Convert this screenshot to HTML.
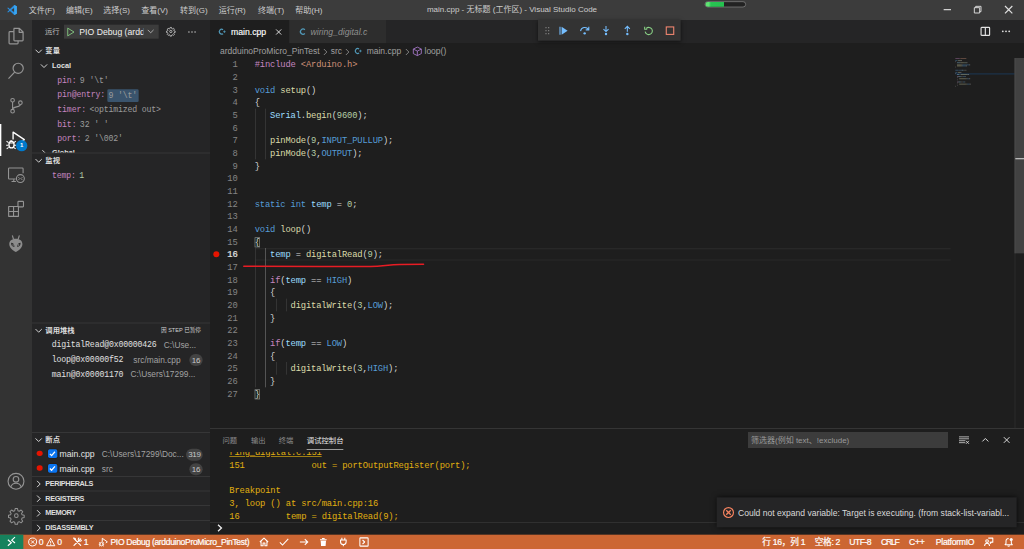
<!DOCTYPE html>
<html lang="zh-CN">
<head>
<meta charset="utf-8">
<title>main.cpp - 无标题 (工作区) - Visual Studio Code</title>
<style>
html,body{margin:0;padding:0;width:1024px;height:549px;overflow:hidden;background:#1e1e1e;}
#root{position:absolute;left:0;top:0;width:1536px;height:823.5px;transform:scale(0.6666667);transform-origin:0 0;
  font-family:"Liberation Sans","Noto Sans CJK SC",sans-serif;font-size:13px;color:#ccc;overflow:hidden;background:#1e1e1e;}
#root *{box-sizing:border-box;}
.abs{position:absolute;}
.mono{font-family:"Liberation Mono","Noto Sans CJK SC",monospace;}
svg{display:block;overflow:visible;}
.t{position:absolute;white-space:pre;line-height:1;}

/* title bar */
#titlebar{left:0;top:0;width:1536px;height:30px;background:#3c3c3c;}
.menu{top:0;height:30px;line-height:30px;font-size:12px;color:#ccc;white-space:pre;}
#wtitle{left:0;top:0;width:1536px;height:30px;line-height:29px;text-align:center;font-size:12px;color:#ccc;white-space:pre;}

/* activity bar */
#activity{left:0;top:30px;width:48px;height:771.5px;background:#333;}
.aicon{left:0;width:48px;height:48px;}
.aicon svg{position:absolute;left:9px;top:9px;width:30px;height:30px;}

/* sidebar */
#sidebar{left:48px;top:30px;width:267px;height:771.5px;background:#252526;overflow:hidden;}
.shead{left:0;width:267px;height:22px;border-top:1px solid #3f3f41;font-size:11px;font-weight:bold;color:#ddd;}
.shead .lbl{position:absolute;left:20px;top:0.6px;line-height:21px;white-space:pre;}
.chev{position:absolute;width:16px;height:16px;}
.row{left:0;width:267px;height:22px;line-height:22px;white-space:pre;font-size:13px;}
.vname{color:#c586c0;}
.vval{color:#9b9b9b;margin-left:5.2px;}

.vr{left:38px;font-size:12.3px;letter-spacing:-0.23px;}
.cs{font-size:12.3px;letter-spacing:-0.23px;color:#e0e0e0;}
.cf{font-size:12.5px;color:#a2a2a2;}
.badge{top:2px;height:18px;line-height:18px;border-radius:9px;background:#434343;color:#c8c8c8;font-size:12px;letter-spacing:-0.4px;text-align:center;}
.bpdot{left:7.2px;top:6px;width:8.8px;height:8.8px;border-radius:5px;background:#e51400;}
.cbx{left:24px;top:4px;width:13.6px;height:13.6px;border-radius:2.5px;background:#0a74f0;box-shadow:0 0 0 0.8px #2a1a10;}
.cbx svg{position:absolute;left:0.3px;top:0.3px}
.bpn{font-size:13px;color:#e4e4e4;}
.bpr .bpn,.bpr .cf,.bpr .badge{margin-top:1.1px}

/* editor */
#tabs{left:315px;top:30px;width:1221px;height:35px;background:#252526;}
#crumbs{left:315px;top:65px;width:1221px;height:22px;background:#1e1e1e;color:#a0a0a0;font-size:13px;}
#code{left:315px;top:87px;width:1221px;height:555px;background:#1e1e1e;overflow:hidden;}
.ln{position:absolute;margin-top:0.7px;left:0;width:41.3px;text-align:right;color:#858585;font-size:13.2px;letter-spacing:-0.22px;height:19px;line-height:19px;}
.cl{position:absolute;margin-top:0.7px;left:67px;height:19px;line-height:19px;font-size:13.2px;letter-spacing:-0.22px;white-space:pre;color:#d4d4d4;}
.k{color:#569cd6}.f{color:#dcdcaa}.v{color:#9cdcfe}.n{color:#b5cea8}.p{color:#c586c0}.s{color:#ce9178}
.g{position:absolute;width:1px;background:#404040;}

.bc{top:4px;line-height:16px;font-size:12.75px;color:#a0a0a0}
.bm{outline:1px solid #888;outline-offset:-1px;background:rgba(0,100,0,0.1)}
/* panel */
#panel{left:315px;top:642px;width:1221px;height:159.5px;background:#1e1e1e;border-top:1px solid #414141;overflow:hidden;}
.ptab{top:0;height:35px;line-height:35px;font-size:11px;color:#8b8b8b;white-space:pre;}
.con{position:absolute;left:29px;height:19px;line-height:19px;font-size:13.2px;letter-spacing:-0.22px;white-space:pre;color:#e0b010;}

/* status */
#status{left:0;top:801.5px;width:1536px;height:22px;background:#cc6633;color:#fff;font-size:13px;letter-spacing:-0.45px;}
.st{position:absolute;top:0;height:22px;line-height:22px;white-space:pre;color:#fff;-webkit-text-stroke:0.3px #fff;}
</style>
</head>
<body>
<div id="root">

<!-- TITLE BAR -->
<div id="titlebar" class="abs">
  <svg class="abs" style="left:9.5px;top:7px;width:16px;height:16px" viewBox="0 0 100 100">
    <path d="M71 4 L31 41 L13 27 L5 31 L24 50 L5 69 L13 73 L31 59 L71 96 L95 86 L95 14 Z M72 29 L72 71 L44 50 Z" fill="#2a8fe0" fill-rule="evenodd"/>
    <path d="M71 4 L95 14 L95 86 L71 96 Z M72 29 L72 71 Z" fill="#3aa6f2"/>
  </svg>
  <div id="wtitle" class="abs">main.cpp - 无标题 (工作区) - Visual Studio Code</div>
  <div class="menu abs" style="left:43px">文件(F)</div>
  <div class="menu abs" style="left:99px">编辑(E)</div>
  <div class="menu abs" style="left:155px">选择(S)</div>
  <div class="menu abs" style="left:212px">查看(V)</div>
  <div class="menu abs" style="left:270px">转到(G)</div>
  <div class="menu abs" style="left:328px">运行(R)</div>
  <div class="menu abs" style="left:387px">终端(T)</div>
  <div class="menu abs" style="left:443px">帮助(H)</div>
  <!-- recording pill -->
  <div class="abs" style="left:1057px;top:1.5px;width:62px;height:9.5px;border-radius:5px;background:#222;border:1px solid #8a8a8a;overflow:hidden">
    <div class="abs" style="left:0;top:0;width:28px;height:8px;background:linear-gradient(90deg,#5fe373 0,#5fe373 18%,#28c452 30%,#25c04f 100%)"></div>
  </div>
  <!-- window controls -->
  <svg class="abs" style="left:1398px;top:-1.100px;width:138px;height:30px" viewBox="0 0 138 30" fill="none" stroke="#e0e0e0" stroke-width="1.4">
    <path d="M17.5 15.5 H28.5" stroke-width="1.700"/>
    <path d="M63.5 12.5 h8 v8 h-8 z M65.5 12.5 v-2 h8 v8 h-2"/>
    <path d="M109.5 10 l11 11 M120.5 10 l-11 11" stroke-width="1.8"/>
  </svg>
</div>

<!-- ACTIVITY BAR -->
<div id="activity" class="abs">
  <!-- files -->
  <div class="aicon abs" style="top:0"><svg viewBox="0 0 24 24" fill="none" stroke="#949494" stroke-width="1.45" stroke-linejoin="round">
    <path d="M9.5 2.8 h6.6 l4.4 4.4 v9.6 a1 1 0 0 1 -1 1 h-9 a1 1 0 0 1 -1 -1 v-13 a1 1 0 0 1 1 -1 z M15.8 3 v4.6 h4.6"/>
    <path d="M9.3 6.8 h-4.6 a1 1 0 0 0 -1 1 v12.6 a1 1 0 0 0 1 1 h8.8 a1 1 0 0 0 1 -1 v-2.6"/></svg></div>
  <!-- search -->
  <div class="aicon abs" style="top:52px"><svg viewBox="0 0 24 24" fill="none" stroke="#949494" stroke-width="1.45">
    <circle cx="14.6" cy="9.2" r="6.1"/><path d="M10.4 13.8 L3 21.6"/></svg></div>
  <!-- scm -->
  <div class="aicon abs" style="top:104px"><svg style="left:10.5px;top:10.5px;width:27.0px;height:27.0px" viewBox="0 0 24 24" fill="none" stroke="#949494" stroke-width="1.45">
    <circle cx="7" cy="4.8" r="2.4"/><circle cx="7" cy="19.4" r="2.4"/><circle cx="17.4" cy="8" r="2.4"/>
    <path d="M7 7.2 V17 M17.4 10.4 c0 4.2 -10.4 2.2 -10.4 6.6"/></svg></div>
  <!-- debug (active) -->
  <div class="aicon abs" style="top:156px">
    <div class="abs" style="left:0;top:0;width:2px;height:48px;background:#fff"></div>
    <svg viewBox="0 0 24 24" fill="none" stroke="#fff" stroke-width="1.6" stroke-linejoin="round">
      <path d="M8.5 11.5 V2.6 L22 11.6 L18 14.2"/>
      <ellipse cx="6.6" cy="17.6" rx="3.1" ry="3.9"/>
      <path d="M3.4 15.6 h5.6 M0.6 13.4 l2.4 1.8 M11.8 13.4 l-2.4 1.8 M0.2 18.2 h2.6 M9.6 18.2 h2.6 M0.8 22.6 l2.4 -1.8 M11.6 22.6 l-2.4 -1.8 M4.6 13.8 a1.8 1.8 0 0 1 3.2 0" stroke-width="1.3"/>
    </svg>
    <div class="abs" style="left:24px;top:24px;width:17px;height:17px;border-radius:9px;background:#007acc;color:#fff;font-size:9px;font-weight:bold;text-align:center;line-height:17px">1</div>
  </div>
  <!-- remote explorer -->
  <div class="aicon abs" style="top:208px"><svg style="left:10.5px;top:10.5px;width:27.0px;height:27.0px" viewBox="0 0 24 24" fill="none" stroke="#949494" stroke-width="1.45" stroke-linejoin="round">
    <path d="M11 17.4 H2.6 a1 1 0 0 1 -1 -1 V3.6 a1 1 0 0 1 1 -1 H20 a1 1 0 0 1 1 1 V9.6"/>
    <path d="M5.6 20.6 h5.8 M8.6 17.6 v3" />
    <circle cx="17.4" cy="16.8" r="5.3"/>
    <path d="M14.6 14.8 l2 2 l-2 2 M20.2 14.8 l-2 2 l2 2" stroke-width="1.2"/></svg></div>
  <!-- extensions -->
  <div class="aicon abs" style="top:260px"><svg style="left:10.2px;top:10.2px;width:27.5px;height:27.5px" viewBox="0 0 24 24" fill="none" stroke="#949494" stroke-width="1.45" stroke-linejoin="round">
    <path d="M2.6 8.6 h12.8 v12.8 h-12.8 z M9 8.6 v12.8 M2.6 15 h12.8 M9 15"/>
    <rect x="14.8" y="1.8" width="7.2" height="7.2" rx="0.8"/></svg></div>
  <!-- platformio alien -->
  <div class="aicon abs" style="top:312px"><svg style="left:10.2px;top:10.2px;width:27.5px;height:27.5px" viewBox="0 0 24 24">
    <path d="M12 5.2 c5.6 0 8.6 3 8.6 7.2 c0 4.600 -5.200 8.600 -8.600 10.200 c-3.400 -1.600 -8.600 -5.600 -8.600 -10.200 c0 -4.200 3 -7.200 8.600 -7.200 z" fill="#8c8c8c"/>
    <path d="M7.600 1.600 l1.200 4 M16.400 1.600 l-1.200 4" stroke="#8c8c8c" stroke-width="1.6" stroke-linecap="round"/>
    <path d="M5.800 10.600 c2.600 0 4.400 2 4.400 5.400 c-2.800 0 -4.800 -2.400 -4.400 -5.400 z M18.200 10.600 c-2.600 0 -4.400 2 -4.400 5.400 c2.800 0 4.800 -2.400 4.400 -5.400 z" fill="#2c2c2c"/>
    <circle cx="8.400" cy="13.600" r="1" fill="#8c8c8c"/><circle cx="15.600" cy="13.600" r="1" fill="#8c8c8c"/></svg></div>
  <!-- account -->
  <div class="aicon abs" style="top:667.5px"><svg style="left:10.0px;top:10.0px;width:28.0px;height:28.0px" viewBox="0 0 24 24" fill="none" stroke="#949494" stroke-width="1.45">
    <circle cx="12" cy="12" r="10.200"/><circle cx="12" cy="9.400" r="3.600"/><path d="M5.200 19.400 c1.200 -3.800 4 -5 6.800 -5 s5.600 1.200 6.800 5"/></svg></div>
  <!-- gear -->
  <div class="aicon abs" style="top:719px"><svg style="left:11.5px;top:11.5px;width:25.0px;height:25.0px" viewBox="0 0 24 24" fill="none" stroke="#949494" stroke-width="1.45" stroke-linejoin="round">
    <circle cx="12" cy="12" r="2.600"/>
    <path d="M10.300 1.800 h3.400 l0.600 3 l1.900 0.800 l2.600 -1.700 l2.400 2.400 l-1.700 2.600 l0.800 1.900 l3 0.600 v3.400 l-3 0.600 l-0.800 1.900 l1.700 2.600 l-2.400 2.400 l-2.600 -1.700 l-1.900 0.800 l-0.600 3 h-3.400 l-0.600 -3 l-1.900 -0.800 l-2.600 1.700 l-2.400 -2.400 l1.700 -2.600 l-0.800 -1.900 l-3 -0.600 v-3.400 l3 -0.600 l0.800 -1.900 l-1.700 -2.600 l2.400 -2.400 l2.600 1.700 l1.900 -0.800 z"/></svg></div>
</div>

<!-- SIDEBAR -->
<div id="sidebar" class="abs">
  <!-- header -->
  <div class="t" style="left:19.5px;top:11px;font-size:11px;line-height:13px;color:#bbb">运行</div>
  <div class="abs" style="left:47.5px;top:7px;width:142.5px;height:21px;background:#3c3c3c;overflow:hidden">
    <svg class="abs" style="left:2px;top:2.5px;width:16px;height:16px" viewBox="0 0 16 16" fill="none" stroke="#89d185" stroke-width="1.3" stroke-linejoin="round"><path d="M3.600 2.200 L13 8 L3.600 13.800 Z"/></svg>
    <div class="t" id="dbgname" style="left:23.500px;top:3px;width:96px;overflow:hidden;font-size:13px;line-height:15px;color:#f0f0f0">PIO Debug (ardduinoProMicro_PinTest)</div>
    <svg class="abs" style="left:123px;top:3px;width:14px;height:14px" viewBox="0 0 16 16" fill="none" stroke="#ccc" stroke-width="1.3"><path d="M3 5.500 L8 10.500 L13 5.500"/></svg>
  </div>
  <svg class="abs" style="left:201px;top:9.500px;width:14.500px;height:14.500px" viewBox="0 0 16 16" fill="none" stroke="#d0d0d0" stroke-width="1.300" stroke-linejoin="round">
    <circle cx="8" cy="8" r="1.900"/>
    <path d="M6.900 1.300 h2.200 l0.400 1.900 l1.200 0.500 l1.700 -1.100 l1.500 1.500 l-1.100 1.700 l0.500 1.200 l1.900 0.400 v2.200 l-1.900 0.400 l-0.500 1.200 l1.100 1.700 l-1.500 1.500 l-1.700 -1.100 l-1.200 0.500 l-0.400 1.900 h-2.200 l-0.400 -1.900 l-1.200 -0.500 l-1.700 1.100 l-1.500 -1.500 l1.100 -1.700 l-0.500 -1.200 l-1.900 -0.400 v-2.200 l1.900 -0.400 l0.500 -1.200 l-1.100 -1.700 l1.500 -1.500 l1.700 1.100 l1.200 -0.500 z"/></svg>
  <svg class="abs" style="left:232px;top:9.500px;width:16px;height:16px" viewBox="0 0 16 16" fill="#c5c5c5"><circle cx="3.400" cy="8" r="1.100"/><circle cx="8" cy="8" r="1.100"/><circle cx="12.600" cy="8" r="1.100"/></svg>

  <!-- VARIABLES -->
  <div class="shead abs" style="top:35px;border-top:none"><svg class="chev" style="left:2.200px;top:4.200px" viewBox="0 0 16 16" fill="none" stroke="#d4d4d4" stroke-width="1.500"><path d="M3.300 5.600 L8 10.300 L12.700 5.600"/></svg><span class="lbl" style="top:1px">变量</span></div>
  <div class="abs" style="left:0;top:58.100px;width:267px;height:140.500px;overflow:hidden">
    <div class="row abs" style="top:-1px"><svg class="chev" style="left:10px;top:3.500px" viewBox="0 0 16 16" fill="none" stroke="#d4d4d4" stroke-width="1.500"><path d="M3.300 5.600 L8 10.300 L12.700 5.600"/></svg><span class="abs" style="left:30px;font-size:11px;font-weight:bold;color:#e0e0e0">Local</span></div>
    <div class="row abs mono vr" style="top:22px"><span class="vname">pin:</span><span class="vval">9 '\t'</span></div>
    <div class="row abs mono vr" style="top:44px"><span class="vname">pin@entry:</span><span class="vval" style="background:#3a546d;padding:2.500px 2px 2.500px 2px;margin-left:3.200px;border-radius:2px">9 '\t'</span></div>
    <div class="row abs mono vr" style="top:66px"><span class="vname">timer:</span><span class="vval">&lt;optimized out&gt;</span></div>
    <div class="row abs mono vr" style="top:88px"><span class="vname">bit:</span><span class="vval">32 ' '</span></div>
    <div class="row abs mono vr" style="top:110px"><span class="vname">port:</span><span class="vval">2 '\002'</span></div>
    <div class="row abs" style="top:130.400px"><svg class="chev" style="left:10px;top:4px" viewBox="0 0 16 16" fill="none" stroke="#d4d4d4" stroke-width="1.500"><path d="M5.600 3.300 L10.300 8 L5.600 12.700"/></svg><span class="abs" style="left:30px;font-size:11px;font-weight:bold;color:#e0e0e0">Global</span></div>
  </div>

  <!-- WATCH -->
  <div class="shead abs" style="top:198.600px"><svg class="chev" style="left:2.200px;top:3.600px" viewBox="0 0 16 16" fill="none" stroke="#d4d4d4" stroke-width="1.500"><path d="M3.300 5.600 L8 10.300 L12.700 5.600"/></svg><span class="lbl">监视</span></div>
  <div class="row abs mono" style="top:222.500px;left:30px;font-size:12.3px;letter-spacing:-0.23px"><span class="vname">temp:</span><span style="color:#b5cea8;margin-left:5.200px">1</span></div>

  <!-- CALL STACK -->
  <div class="shead abs" style="top:453.700px"><svg class="chev" style="left:2.200px;top:3.600px" viewBox="0 0 16 16" fill="none" stroke="#d4d4d4" stroke-width="1.500"><path d="M3.300 5.600 L8 10.300 L12.700 5.600"/></svg><span class="lbl">调用堆栈</span>
    <span class="t" id="paused" style="left:193.500px;top:6px;font-size:8.4px;font-weight:normal;color:#d0d0d0">因 STEP 已暂停</span></div>
  <div class="row abs" style="top:477.200px"><span class="abs mono cs" style="left:29.600px">digitalRead@0x00000426</span><span class="abs cf" style="left:197.600px">C:\Use...</span></div>
  <div class="row abs" style="top:499.200px"><span class="abs mono cs" style="left:29.600px">loop@0x00000f52</span><span class="abs cf" style="left:152px">src/main.cpp</span><span class="badge abs" style="left:236px;width:20px">16</span></div>
  <div class="row abs" style="top:521.200px"><span class="abs mono cs" style="left:29.600px">main@0x00001170</span><span class="abs cf" style="left:147.750px">C:\Users\17299...</span></div>

  <!-- BREAKPOINTS -->
  <div class="shead abs" style="top:617.500px"><svg class="chev" style="left:2.200px;top:3.600px" viewBox="0 0 16 16" fill="none" stroke="#d4d4d4" stroke-width="1.500"><path d="M3.300 5.600 L8 10.300 L12.700 5.600"/></svg><span class="lbl">断点</span></div>
  <div class="row abs bpr" style="top:639.500px"><span class="bpdot abs"></span><span class="cbx abs"><svg viewBox="0 0 13 13" fill="none" stroke="#fff" stroke-width="1.800" style="width:13px;height:13px"><path d="M2.800 6.800 L5.400 9.400 L10.400 3.600"/></svg></span><span class="abs bpn" style="left:41.250px">main.cpp</span><span class="abs cf" style="left:104.600px">C:\Users\17299\Doc...</span><span class="badge abs" style="left:231.400px;width:24.500px">319</span></div>
  <div class="row abs bpr" style="top:661.500px"><span class="bpdot abs"></span><span class="cbx abs"><svg viewBox="0 0 13 13" fill="none" stroke="#fff" stroke-width="1.800" style="width:13px;height:13px"><path d="M2.800 6.800 L5.400 9.400 L10.400 3.600"/></svg></span><span class="abs bpn" style="left:41.250px">main.cpp</span><span class="abs cf" style="left:104.600px">src</span><span class="badge abs" style="left:236px;width:20px">16</span></div>

  <!-- collapsed -->
  <div class="shead abs" style="top:683.500px"><svg class="chev" style="left:2.200px;top:3.600px" viewBox="0 0 16 16" fill="none" stroke="#d4d4d4" stroke-width="1.500"><path d="M5.600 3.300 L10.300 8 L5.600 12.700"/></svg><span class="lbl" style="letter-spacing:-0.6px">PERIPHERALS</span></div>
  <div class="shead abs" style="top:705.500px"><svg class="chev" style="left:2.200px;top:3.600px" viewBox="0 0 16 16" fill="none" stroke="#d4d4d4" stroke-width="1.500"><path d="M5.600 3.300 L10.300 8 L5.600 12.700"/></svg><span class="lbl" style="letter-spacing:-0.6px">REGISTERS</span></div>
  <div class="shead abs" style="top:727.500px"><svg class="chev" style="left:2.200px;top:3.600px" viewBox="0 0 16 16" fill="none" stroke="#d4d4d4" stroke-width="1.500"><path d="M5.600 3.300 L10.300 8 L5.600 12.700"/></svg><span class="lbl" style="letter-spacing:-0.6px">MEMORY</span></div>
  <div class="shead abs" style="top:749.500px"><svg class="chev" style="left:2.200px;top:3.600px" viewBox="0 0 16 16" fill="none" stroke="#d4d4d4" stroke-width="1.500"><path d="M5.600 3.300 L10.300 8 L5.600 12.700"/></svg><span class="lbl" style="letter-spacing:-0.6px">DISASSEMBLY</span></div>
</div>

<!-- EDITOR -->
<div id="tabs" class="abs">
  <div class="abs" style="left:0;top:0;width:118.5px;height:35px;background:#1e1e1e"></div>
  <div class="abs" style="left:118.5px;top:0;width:145px;height:35px;background:#2d2d2d"></div>
  <!-- cpp icon -->
  <svg class="abs" style="left:13px;top:11.500px;width:11px;height:11px" viewBox="0 0 14 14" fill="none" stroke="#519aba" stroke-width="2.300"><path d="M8.400 3.200 A4.600 4.600 0 1 0 8.400 10.800"/><path d="M8.600 7 h4.800 M11 4.600 v4.800" stroke-width="1.500"/></svg>
  <div class="t" id="tab1" style="left:31.500px;top:10.7px;font-size:13px;line-height:16px;color:#fff;-webkit-text-stroke:0.2px #fff">main.cpp</div>
  <svg class="abs" style="left:95.500px;top:10.500px;width:14px;height:14px" viewBox="0 0 16 16" fill="none" stroke="#f0f0f0" stroke-width="1.500"><path d="M3.600 3.600 l8.800 8.800 M12.400 3.600 l-8.800 8.800"/></svg>
  <!-- c icon -->
  <svg class="abs" style="left:134px;top:11.500px;width:11px;height:11px" viewBox="0 0 14 14" fill="none" stroke="#519aba" stroke-width="2.300"><path d="M10.600 3.400 A5 5 0 1 0 10.600 10.600"/></svg>
  <div class="t" id="tab2" style="left:150.750px;top:10.7px;font-size:13px;line-height:16px;color:#909090;font-style:italic">wiring_digital.c</div>
  <!-- editor actions -->
  <svg class="abs" style="left:1155px;top:8.500px;width:16px;height:16px" viewBox="0 0 16 16" fill="none" stroke="#e4e4e4" stroke-width="1.700"><rect x="1.600" y="2" width="12.800" height="12" rx="1"/><path d="M8 2 v12"/></svg>
  <svg class="abs" style="left:1186px;top:8.500px;width:16px;height:16px" viewBox="0 0 16 16" fill="#e0e0e0"><circle cx="3.200" cy="8" r="1.350"/><circle cx="8" cy="8" r="1.350"/><circle cx="12.800" cy="8" r="1.350"/></svg>
</div>
<div id="crumbs" class="abs">
  <div class="t bc" id="bc1" style="left:15px">ardduinoProMicro_PinTest</div>
  <svg class="abs" style="left:164.500px;top:4.500px;width:16px;height:16px" viewBox="0 0 16 16" fill="none" stroke="#a0a0a0" stroke-width="1.100"><path d="M5.800 3.500 L10.300 8 L5.800 12.500"/></svg>
  <div class="t bc" id="bc2" style="left:181px">src</div>
  <svg class="abs" style="left:197.500px;top:4.500px;width:16px;height:16px" viewBox="0 0 16 16" fill="none" stroke="#a0a0a0" stroke-width="1.100"><path d="M5.800 3.500 L10.300 8 L5.800 12.500"/></svg>
  <svg class="abs" style="left:217px;top:6px;width:11px;height:11px" viewBox="0 0 14 14" fill="none" stroke="#519aba" stroke-width="2.300"><path d="M8.400 3.200 A4.600 4.600 0 1 0 8.400 10.800"/><path d="M8.600 7 h4.800 M11 4.600 v4.800" stroke-width="1.500"/></svg>
  <div class="t bc" id="bc3" style="left:235px">main.cpp</div>
  <svg class="abs" style="left:287.500px;top:4.500px;width:16px;height:16px" viewBox="0 0 16 16" fill="none" stroke="#a0a0a0" stroke-width="1.100"><path d="M5.800 3.500 L10.300 8 L5.800 12.500"/></svg>
  <svg class="abs" style="left:303px;top:3.800px;width:16px;height:16px" viewBox="0 0 16 16" fill="none" stroke="#b180d7" stroke-width="1.200" stroke-linejoin="round"><path d="M8 1.600 L14 4.600 V11.400 L8 14.400 L2 11.400 V4.600 Z M2 4.600 L8 7.600 L14 4.600 M8 7.600 V14.400"/></svg>
  <div class="t bc" id="bc4" style="left:321.750px">loop()</div>
</div>
<div id="code" class="abs mono">
  <div class="abs" style="left:68px;top:285px;width:1043.3px;height:19px;border-top:2px solid #282828;border-bottom:2px solid #282828"></div>
  <div class="abs" style="left:4.5px;top:289.750px;width:9.5px;height:9.5px;border-radius:5px;background:#e51400"></div>
  <div class="g" style="left:68.00px;top:76px;height:76px;background:#404040"></div>
  <div class="g" style="left:83.40px;top:76px;height:76px;background:#404040"></div>
  <div class="g" style="left:68.00px;top:285px;height:209px;background:#404040"></div>
  <div class="g" style="left:83.40px;top:285px;height:209px;background:#707070"></div>
  <div class="g" style="left:98.80px;top:361px;height:19px;background:#404040"></div>
  <div class="g" style="left:114.20px;top:361px;height:19px;background:#404040"></div>
  <div class="g" style="left:98.80px;top:456px;height:19px;background:#404040"></div>
  <div class="g" style="left:114.20px;top:456px;height:19px;background:#404040"></div>
  <div class="ln" style="top:0px">1</div>
  <div class="cl" style="top:0px"><span class="p">#include</span> <span class="s">&lt;Arduino.h&gt;</span></div>
  <div class="ln" style="top:19px">2</div>
  <div class="ln" style="top:38px">3</div>
  <div class="cl" style="top:38px"><span class="k">void</span> <span class="f">setup</span>()</div>
  <div class="ln" style="top:57px">4</div>
  <div class="cl" style="top:57px">{</div>
  <div class="ln" style="top:76px">5</div>
  <div class="cl" style="top:76px">   <span class="v">Serial</span>.<span class="f">begin</span>(<span class="n">9600</span>);</div>
  <div class="ln" style="top:95px">6</div>
  <div class="ln" style="top:114px">7</div>
  <div class="cl" style="top:114px">   <span class="f">pinMode</span>(<span class="n">9</span>,<span class="k">INPUT_PULLUP</span>);</div>
  <div class="ln" style="top:133px">8</div>
  <div class="cl" style="top:133px">   <span class="f">pinMode</span>(<span class="n">3</span>,<span class="k">OUTPUT</span>);</div>
  <div class="ln" style="top:152px">9</div>
  <div class="cl" style="top:152px">}</div>
  <div class="ln" style="top:171px">10</div>
  <div class="ln" style="top:190px">11</div>
  <div class="ln" style="top:209px">12</div>
  <div class="cl" style="top:209px"><span class="k">static</span> <span class="k">int</span> <span class="v">temp</span> = <span class="n">0</span>;</div>
  <div class="ln" style="top:228px">13</div>
  <div class="ln" style="top:247px">14</div>
  <div class="cl" style="top:247px"><span class="k">void</span> <span class="f">loop</span>()</div>
  <div class="ln" style="top:266px">15</div>
  <div class="cl" style="top:266px"><span class="bm">{</span></div>
  <div class="ln" style="top:285px;color:#e0e0e0;-webkit-text-stroke:0.35px #e0e0e0">16</div>
  <div class="cl" style="top:285px">   <span class="v">temp</span> = <span class="f">digitalRead</span>(<span class="n">9</span>);</div>
  <div class="ln" style="top:304px">17</div>
  <div class="ln" style="top:323px">18</div>
  <div class="cl" style="top:323px">   <span class="p">if</span>(<span class="v">temp</span> == <span class="k">HIGH</span>)</div>
  <div class="ln" style="top:342px">19</div>
  <div class="cl" style="top:342px">   {</div>
  <div class="ln" style="top:361px">20</div>
  <div class="cl" style="top:361px">       <span class="f">digitalWrite</span>(<span class="n">3</span>,<span class="k">LOW</span>);</div>
  <div class="ln" style="top:380px">21</div>
  <div class="cl" style="top:380px">   }</div>
  <div class="ln" style="top:399px">22</div>
  <div class="ln" style="top:418px">23</div>
  <div class="cl" style="top:418px">   <span class="p">if</span>(<span class="v">temp</span> == <span class="k">LOW</span>)</div>
  <div class="ln" style="top:437px">24</div>
  <div class="cl" style="top:437px">   {</div>
  <div class="ln" style="top:456px">25</div>
  <div class="cl" style="top:456px">       <span class="f">digitalWrite</span>(<span class="n">3</span>,<span class="k">HIGH</span>);</div>
  <div class="ln" style="top:475px">26</div>
  <div class="cl" style="top:475px">   }</div>
  <div class="ln" style="top:494px">27</div>
  <div class="cl" style="top:494px"><span class="bm">}</span></div>
  <svg class="abs" style="left:1117.5px;top:0;width:90px;height:60px" viewBox="0 0 90 60">
    <rect x="0" y="23.4" width="90" height="1.05" fill="#1b426b"/>
    <rect x="0.00" y="0.10" width="6.60" height="1.3" fill="#c586c0" opacity="0.42"/>
    <rect x="7.42" y="0.10" width="9.07" height="1.3" fill="#ce9178" opacity="0.42"/>
    <rect x="0.00" y="3.30" width="3.30" height="1.3" fill="#569cd6" opacity="0.42"/>
    <rect x="4.12" y="3.30" width="4.12" height="1.3" fill="#dcdcaa" opacity="0.42"/>
    <rect x="8.25" y="3.30" width="1.65" height="1.3" fill="#d4d4d4" opacity="0.42"/>
    <rect x="0.00" y="4.90" width="0.82" height="1.3" fill="#d4d4d4" opacity="0.42"/>
    <rect x="2.47" y="6.50" width="4.95" height="1.3" fill="#9cdcfe" opacity="0.42"/>
    <rect x="7.42" y="6.50" width="0.82" height="1.3" fill="#d4d4d4" opacity="0.42"/>
    <rect x="8.25" y="6.50" width="4.12" height="1.3" fill="#dcdcaa" opacity="0.42"/>
    <rect x="12.37" y="6.50" width="0.82" height="1.3" fill="#d4d4d4" opacity="0.42"/>
    <rect x="13.20" y="6.50" width="3.30" height="1.3" fill="#b5cea8" opacity="0.42"/>
    <rect x="16.50" y="6.50" width="1.65" height="1.3" fill="#d4d4d4" opacity="0.42"/>
    <rect x="2.47" y="9.70" width="5.77" height="1.3" fill="#dcdcaa" opacity="0.42"/>
    <rect x="8.25" y="9.70" width="0.82" height="1.3" fill="#d4d4d4" opacity="0.42"/>
    <rect x="9.07" y="9.70" width="0.82" height="1.3" fill="#b5cea8" opacity="0.42"/>
    <rect x="9.90" y="9.70" width="0.82" height="1.3" fill="#d4d4d4" opacity="0.42"/>
    <rect x="10.72" y="9.70" width="9.90" height="1.3" fill="#569cd6" opacity="0.42"/>
    <rect x="20.62" y="9.70" width="1.65" height="1.3" fill="#d4d4d4" opacity="0.42"/>
    <rect x="2.47" y="11.30" width="5.77" height="1.3" fill="#dcdcaa" opacity="0.42"/>
    <rect x="8.25" y="11.30" width="0.82" height="1.3" fill="#d4d4d4" opacity="0.42"/>
    <rect x="9.07" y="11.30" width="0.82" height="1.3" fill="#b5cea8" opacity="0.42"/>
    <rect x="9.90" y="11.30" width="0.82" height="1.3" fill="#d4d4d4" opacity="0.42"/>
    <rect x="10.72" y="11.30" width="4.95" height="1.3" fill="#569cd6" opacity="0.42"/>
    <rect x="15.67" y="11.30" width="1.65" height="1.3" fill="#d4d4d4" opacity="0.42"/>
    <rect x="0.00" y="12.90" width="0.82" height="1.3" fill="#d4d4d4" opacity="0.42"/>
    <rect x="0.00" y="17.70" width="4.95" height="1.3" fill="#569cd6" opacity="0.42"/>
    <rect x="5.77" y="17.70" width="2.47" height="1.3" fill="#569cd6" opacity="0.42"/>
    <rect x="9.07" y="17.70" width="3.30" height="1.3" fill="#9cdcfe" opacity="0.42"/>
    <rect x="13.20" y="17.70" width="0.82" height="1.3" fill="#d4d4d4" opacity="0.42"/>
    <rect x="14.85" y="17.70" width="0.82" height="1.3" fill="#b5cea8" opacity="0.42"/>
    <rect x="15.67" y="17.70" width="0.82" height="1.3" fill="#d4d4d4" opacity="0.42"/>
    <rect x="0.00" y="20.90" width="3.30" height="1.3" fill="#569cd6" opacity="0.42"/>
    <rect x="4.12" y="20.90" width="3.30" height="1.3" fill="#dcdcaa" opacity="0.42"/>
    <rect x="7.42" y="20.90" width="1.65" height="1.3" fill="#d4d4d4" opacity="0.42"/>
    <rect x="0.00" y="22.50" width="0.82" height="1.3" fill="#d4d4d4" opacity="0.42"/>
    <rect x="2.47" y="24.10" width="3.30" height="1.3" fill="#9cdcfe" opacity="0.42"/>
    <rect x="6.60" y="24.10" width="0.82" height="1.3" fill="#d4d4d4" opacity="0.42"/>
    <rect x="8.25" y="24.10" width="9.07" height="1.3" fill="#dcdcaa" opacity="0.42"/>
    <rect x="17.32" y="24.10" width="0.82" height="1.3" fill="#d4d4d4" opacity="0.42"/>
    <rect x="18.15" y="24.10" width="0.82" height="1.3" fill="#b5cea8" opacity="0.42"/>
    <rect x="18.97" y="24.10" width="1.65" height="1.3" fill="#d4d4d4" opacity="0.42"/>
    <rect x="2.47" y="27.30" width="1.65" height="1.3" fill="#c586c0" opacity="0.42"/>
    <rect x="4.12" y="27.30" width="0.82" height="1.3" fill="#d4d4d4" opacity="0.42"/>
    <rect x="4.95" y="27.30" width="3.30" height="1.3" fill="#9cdcfe" opacity="0.42"/>
    <rect x="9.07" y="27.30" width="1.65" height="1.3" fill="#d4d4d4" opacity="0.42"/>
    <rect x="11.55" y="27.30" width="3.30" height="1.3" fill="#569cd6" opacity="0.42"/>
    <rect x="14.85" y="27.30" width="0.82" height="1.3" fill="#d4d4d4" opacity="0.42"/>
    <rect x="2.47" y="28.90" width="0.82" height="1.3" fill="#d4d4d4" opacity="0.42"/>
    <rect x="5.78" y="30.50" width="9.90" height="1.3" fill="#dcdcaa" opacity="0.42"/>
    <rect x="15.67" y="30.50" width="0.82" height="1.3" fill="#d4d4d4" opacity="0.42"/>
    <rect x="16.50" y="30.50" width="0.82" height="1.3" fill="#b5cea8" opacity="0.42"/>
    <rect x="17.32" y="30.50" width="0.82" height="1.3" fill="#d4d4d4" opacity="0.42"/>
    <rect x="18.15" y="30.50" width="2.47" height="1.3" fill="#569cd6" opacity="0.42"/>
    <rect x="20.62" y="30.50" width="1.65" height="1.3" fill="#d4d4d4" opacity="0.42"/>
    <rect x="2.47" y="32.10" width="0.82" height="1.3" fill="#d4d4d4" opacity="0.42"/>
    <rect x="2.47" y="35.30" width="1.65" height="1.3" fill="#c586c0" opacity="0.42"/>
    <rect x="4.12" y="35.30" width="0.82" height="1.3" fill="#d4d4d4" opacity="0.42"/>
    <rect x="4.95" y="35.30" width="3.30" height="1.3" fill="#9cdcfe" opacity="0.42"/>
    <rect x="9.07" y="35.30" width="1.65" height="1.3" fill="#d4d4d4" opacity="0.42"/>
    <rect x="11.55" y="35.30" width="2.47" height="1.3" fill="#569cd6" opacity="0.42"/>
    <rect x="14.02" y="35.30" width="0.82" height="1.3" fill="#d4d4d4" opacity="0.42"/>
    <rect x="2.47" y="36.90" width="0.82" height="1.3" fill="#d4d4d4" opacity="0.42"/>
    <rect x="5.78" y="38.50" width="9.90" height="1.3" fill="#dcdcaa" opacity="0.42"/>
    <rect x="15.67" y="38.50" width="0.82" height="1.3" fill="#d4d4d4" opacity="0.42"/>
    <rect x="16.50" y="38.50" width="0.82" height="1.3" fill="#b5cea8" opacity="0.42"/>
    <rect x="17.32" y="38.50" width="0.82" height="1.3" fill="#d4d4d4" opacity="0.42"/>
    <rect x="18.15" y="38.50" width="3.30" height="1.3" fill="#569cd6" opacity="0.42"/>
    <rect x="21.45" y="38.50" width="1.65" height="1.3" fill="#d4d4d4" opacity="0.42"/>
    <rect x="2.47" y="40.10" width="0.82" height="1.3" fill="#d4d4d4" opacity="0.42"/>
    <rect x="0.00" y="41.70" width="0.82" height="1.3" fill="#d4d4d4" opacity="0.42"/>
  </svg>
  <div class="abs" style="left:1207px;top:0;width:14px;height:555px;border-left:1px solid #303030"></div>
  <div class="abs" style="left:1207px;top:0;width:14px;height:292.5px;background:#424242;border-left:1px solid #4f4f4f"></div>
  <div class="abs" style="left:1207.500px;top:150px;width:13.5px;height:2px;background:#b8b8b8"></div>
</div>

<!-- PANEL -->
<div id="panel" class="abs">
  <div class="ptab abs" style="left:18.750px">问题</div>
  <div class="ptab abs" style="left:61.400px">输出</div>
  <div class="ptab abs" style="left:103px">终端</div>
  <div class="ptab abs" style="left:145.300px;color:#e7e7e7">调试控制台</div>
  <div class="abs" style="left:145.300px;top:30.500px;width:55px;height:1.300px;background:#d8d8d8"></div>
  <!-- filter -->
  <div class="abs" style="left:807px;top:4.700px;width:300px;height:24px;background:#3c3c3c">
    <div class="t" id="filt" style="left:4.500px;top:4px;font-size:12px;line-height:16px;color:#9a9a9a">筛选器(例如 text、!exclude)</div>
  </div>
  <svg class="abs" style="left:1123px;top:8.700px;width:16px;height:16px" viewBox="0 0 16 16" fill="none" stroke="#dcdcdc" stroke-width="1.150"><path d="M0.500 3.300 h15 M0.500 6.200 h15 M0.500 9.100 h9.500 M0.500 12 h9.500"/><path d="M11 9.300 l4.400 4.400 M15.400 9.300 l-4.400 4.400" stroke-width="1.300"/></svg>
  <svg class="abs" style="left:1155px;top:8.700px;width:16px;height:16px" viewBox="0 0 16 16" fill="none" stroke="#dcdcdc" stroke-width="1.500"><path d="M3.500 10.200 L8 5.700 L12.500 10.200"/></svg>
  <svg class="abs" style="left:1186.500px;top:8.700px;width:16px;height:16px" viewBox="0 0 16 16" fill="none" stroke="#dcdcdc" stroke-width="1.500"><path d="M3.800 3.800 l8.400 8.400 M12.200 3.800 l-8.400 8.400"/></svg>
  <!-- console -->
  <div class="abs mono" style="left:0;top:35px;width:1221px;height:105.700px;overflow:hidden">
    <div class="con" style="top:-8.300px;text-decoration:underline">ring_digital.c:151</div>
    <div class="con" style="top:10.700px">151             out = portOutputRegister(port);</div>
    <div class="con" style="top:48.700px">Breakpoint</div>
    <div class="con" style="top:67.700px">3, loop () at src/main.cpp:16</div>
    <div class="con" style="top:86.700px">16         temp = digitalRead(9);</div>
  </div>
  <div class="abs" style="left:0;top:139.700px;width:1221px;height:1px;background:#3a3a3a"></div>
  <svg class="abs" style="left:7px;top:141px;width:16px;height:16px" viewBox="0 0 16 16" fill="none" stroke="#f0f0f0" stroke-width="1.900"><path d="M5 3.200 L10.200 8 L5 12.800"/></svg>
</div>

<!-- STATUS BAR -->
<div id="status" class="abs">
  <div class="abs" style="left:0;top:0;width:34.500px;height:22px;background:#16825d"></div>
  <svg class="abs" style="left:0;top:0;width:34px;height:22px" viewBox="0 0 34 22" fill="none" stroke="#fff" stroke-width="1.7"><path d="M11.800 7.600 L17 12.200 L11.800 16.700 M22.500 3.800 L17.600 8.200 L22.500 12.500"/></svg>
  <!-- errors -->
  <svg class="abs" style="left:41.500px;top:4px;width:14px;height:14px" viewBox="0 0 14 14" fill="none" stroke="#fff" stroke-width="1.45"><circle cx="7" cy="7" r="6"/><path d="M4.600 4.600 l4.800 4.800 M9.400 4.600 l-4.800 4.800"/></svg>
  <div class="st" style="left:58px">0</div>
  <svg class="abs" style="left:68.500px;top:4px;width:14px;height:14px" viewBox="0 0 14 14" fill="none" stroke="#fff" stroke-width="1.45" stroke-linejoin="round"><path d="M7 1.400 L13.200 12.600 H0.800 Z M7 5.400 v3.800 M7 10.200 v1.400"/></svg>
  <div class="st" style="left:86px">0</div>
  <!-- tools -->
  <svg class="abs" style="left:108.500px;top:4px;width:14px;height:14px" viewBox="0 0 14 14" fill="none" stroke="#fff" stroke-width="1.85" stroke-linecap="round"><path d="M2 2 L12 12 M12 2.400 L2 12"/><path d="M9.500 1 a2.600 2.600 0 1 0 3.600 3.600" stroke-width="1.55"/><path d="M1.400 1 l2.400 0.800 l0.800 2.400" stroke-width="1.55"/></svg>
  <div class="st" style="left:125.500px">1</div>
  <!-- debug icon -->
  <svg class="abs" style="left:148px;top:4px;width:14px;height:14px" viewBox="0 0 14 14" fill="none" stroke="#fff" stroke-width="1.45" stroke-linejoin="round"><path d="M5.400 6.800 V1.400 L13 6.800 L10.600 8.400"/><ellipse cx="4.200" cy="10.200" rx="2.200" ry="2.700"/><path d="M0.600 7.800 l1.600 1 M7.800 7.800 l-1.600 1 M0.200 10.400 h1.800 M6.400 10.400 h1.800 M0.600 13.200 l1.600 -1 M7.800 13.200 l-1.600 -1"/></svg>
  <div class="st" id="stdbg" style="left:165.750px;font-size:12.8px;letter-spacing:-0.48px">PIO Debug (ardduinoProMicro_PinTest)</div>
  <!-- home -->
  <svg class="abs" style="left:388.500px;top:4px;width:14px;height:14px" viewBox="0 0 14 14" fill="none" stroke="#fff" stroke-width="1.55" stroke-linejoin="round"><path d="M0.800 7 L7 1.200 L13.200 7 M2.600 5.800 V12.600 H5.600 V8.600 H8.400 V12.600 H11.400 V5.800"/></svg>
  <!-- check -->
  <svg class="abs" style="left:418.500px;top:4px;width:14px;height:14px" viewBox="0 0 14 14" fill="none" stroke="#fff" stroke-width="1.65"><path d="M0.800 7.600 L4.800 11.600 L13.400 2.400"/></svg>
  <!-- arrow -->
  <svg class="abs" style="left:448.500px;top:4px;width:14px;height:14px" viewBox="0 0 14 14" fill="none" stroke="#fff" stroke-width="1.65"><path d="M0.800 7 H12.600 M8.200 2.600 L12.600 7 L8.200 11.400"/></svg>
  <!-- trash -->
  <svg class="abs" style="left:478px;top:4px;width:14px;height:14px" viewBox="0 0 14 14"><path d="M2 3 h10 v1.200 h-10 z M5 1 h4 v1.600 h-4 z M3 5 h8 l-0.600 8 h-6.800 z" fill="#fff"/></svg>
  <!-- plug -->
  <svg class="abs" style="left:508px;top:4px;width:14px;height:14px" viewBox="0 0 14 14" fill="none" stroke="#fff" stroke-width="1.65"><path d="M4.800 0.800 v3 M9.200 0.800 v3 M2.800 4 h8.400 v2.600 a4.200 4.200 0 0 1 -8.400 0 z M7 10.800 v2.600"/></svg>
  <!-- terminal -->
  <svg class="abs" style="left:539px;top:4px;width:14px;height:14px" viewBox="0 0 14 14" fill="none" stroke="#fff" stroke-width="1.55" stroke-linejoin="round"><rect x="0.800" y="0.800" width="12.400" height="12.400" rx="1"/><path d="M4.800 4 L8 7 L4.800 10"/></svg>
  <!-- right -->
  <div class="st" id="sr1" style="left:1143.500px">行 16，列 1</div>
  <div class="st" id="sr2" style="left:1222px">空格: 2</div>
  <div class="st" id="sr3" style="left:1274px;letter-spacing:-0.9px">UTF-8</div>
  <div class="st" id="sr4" style="left:1321.500px;letter-spacing:-1.9px">CRLF</div>
  <div class="st" id="sr5" style="left:1363.500px">C++</div>
  <div class="st" id="sr6" style="left:1403.700px">PlatformIO</div>
  <svg class="abs" style="left:1475.500px;top:4px;width:14px;height:14px" viewBox="0 0 14 14" fill="none" stroke="#fff" stroke-width="1.55" stroke-linejoin="round"><circle cx="4.600" cy="5.600" r="2"/><path d="M0.800 13 c0.400 -3 2 -4.200 3.800 -4.200 s3.400 1.200 3.800 4.200 M6.400 1.200 h6.800 v6 h-2 l-1.600 1.800 v-1.800 h-1"/></svg>
  <svg class="abs" style="left:1506px;top:4px;width:14px;height:14px" viewBox="0 0 14 14" fill="none" stroke="#fff" stroke-width="1.55" stroke-linejoin="round"><path d="M7 1.600 a4 4 0 0 0 -4 4 v3.600 l-1.400 1.800 h10.800 l-1.400 -1.800 v-3.600 M5.600 12.400 a1.500 1.500 0 0 0 2.800 0"/><circle cx="10.800" cy="3.200" r="2.300" fill="#fff" stroke="none"/></svg>
</div>

<!-- debug toolbar -->
<div class="abs" style="left:806.500px;top:30px;width:214px;height:31px;background:#333;box-shadow:0 2px 6px rgba(0,0,0,0.55)">
  <svg class="abs" style="left:6.500px;top:8px;width:16px;height:16px" viewBox="0 0 16 16" fill="#8a8a8a"><circle cx="6" cy="3.500" r="1"/><circle cx="10" cy="3.500" r="1"/><circle cx="6" cy="8" r="1"/><circle cx="10" cy="8" r="1"/><circle cx="6" cy="12.500" r="1"/><circle cx="10" cy="12.500" r="1"/></svg>
  <svg class="abs" style="left:30.500px;top:8px;width:16px;height:16px" viewBox="0 0 16 16"><path d="M2.200 2 h1.600 v12 h-1.600 z M5.400 2 l9 6 l-9 6 z" fill="#75beff"/></svg>
  <svg class="abs" style="left:62.500px;top:8px;width:16px;height:16px" viewBox="0 0 16 16" fill="none" stroke="#75beff" stroke-width="1.600"><path d="M1.800 8.600 A6.400 6.400 0 0 1 13.600 6.400 M14.200 2.200 V6.800 H9.600"/><circle cx="8" cy="12" r="1.800" fill="#75beff" stroke="none"/></svg>
  <svg class="abs" style="left:94px;top:8px;width:16px;height:16px" viewBox="0 0 16 16" fill="none" stroke="#75beff" stroke-width="1.600"><path d="M8 1 V9 M4.200 5.600 L8 9.400 L11.800 5.600"/><circle cx="8" cy="13" r="1.800" fill="#75beff" stroke="none"/></svg>
  <svg class="abs" style="left:126.300px;top:8px;width:16px;height:16px" viewBox="0 0 16 16" fill="none" stroke="#75beff" stroke-width="1.600"><path d="M8 9.600 V1.600 M4.200 5.200 L8 1.400 L11.800 5.200"/><circle cx="8" cy="13" r="1.800" fill="#75beff" stroke="none"/></svg>
  <svg class="abs" style="left:158.700px;top:8px;width:16px;height:16px" viewBox="0 0 16 16" fill="none" stroke="#89d185" stroke-width="1.600"><path d="M4.400 4.600 A5.400 5.400 0 1 1 2.800 9.400 M2 2 V5.800 H5.800"/></svg>
  <svg class="abs" style="left:190.200px;top:8px;width:16px;height:16px" viewBox="0 0 16 16" fill="none" stroke="#f48771" stroke-width="1.600"><rect x="2.400" y="2.400" width="11.200" height="11.200"/></svg>
</div>
<!-- red hand-drawn line -->
<svg class="abs" style="left:0;top:0;width:1536px;height:823.500px;pointer-events:none" viewBox="0 0 1536 823.5" fill="none"><path d="M365.700 399.300 L 480 399.700 L 556 399.600 C 574 399.500, 582 396.900, 600 396.700 L 635.300 396.500" stroke="#e81c24" stroke-width="2.300" stroke-linecap="round" stroke-linejoin="round"/></svg>
<!-- notification -->
<div class="abs" style="left:1074.750px;top:746.250px;width:450px;height:44.250px;background:#252526;box-shadow:0 0 8px rgba(0,0,0,0.7)">
  <svg class="abs" style="left:9.500px;top:13.500px;width:17.500px;height:17.500px" viewBox="0 0 16 16" fill="none" stroke="#f4825f" stroke-width="1.600"><circle cx="8" cy="8" r="6.800"/><path d="M4.900 4.900 l6.200 6.200 M11.100 4.900 l-6.200 6.200" stroke-width="1.800"/></svg>
  <div class="t" id="notif" style="left:32.250px;top:15.300px;font-size:12.85px;line-height:16px;color:#dadada">Could not expand variable: Target is executing. (from stack-list-variabl...</div>
</div>

</div>
</body>
</html>
